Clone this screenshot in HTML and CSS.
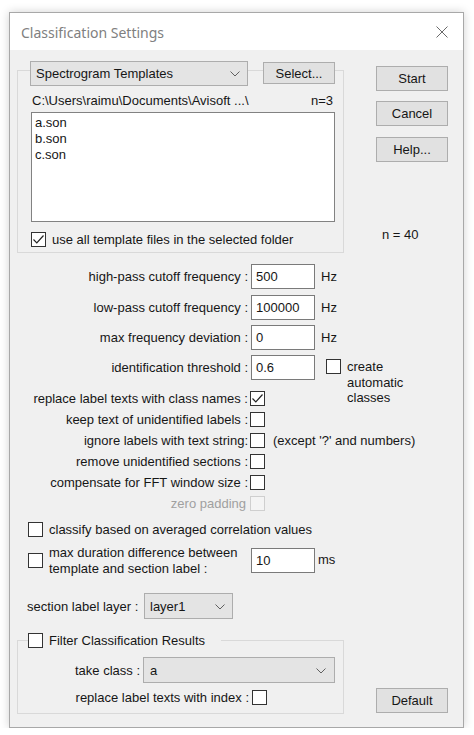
FILE: index.html
```html
<!DOCTYPE html>
<html>
<head>
<meta charset="utf-8">
<title>Classification Settings</title>
<link rel="stylesheet" href="styles.css">
</head>
<body>
<div class="window">
  <div class="titlebar">
    <span class="title">Classification Settings</span>
    <svg class="close" width="12" height="12" viewBox="0 0 12 12"><path d="M0.5 0.5L11.5 11.5M11.5 0.5L0.5 11.5" stroke="#6a6a6a" stroke-width="1" fill="none"/></svg>
  </div>
  <div class="client">
    <div class="top">
      <div class="group tmpl">
        <div class="tmpl-head">
          <div class="combo combo-tmpl"><span>Spectrogram Templates</span><svg class="chev" width="10" height="6" viewBox="0 0 10 6"><path d="M0.5 0.5L5 5L9.5 0.5" stroke="#606060" stroke-width="1" fill="none"/></svg></div>
          <div class="btn btn-select">Select...</div>
        </div>
        <div class="path"><span>C:\Users\raimu\Documents\Avisoft ...\</span><span>n=3</span></div>
        <div class="listbox">
          <div>a.son</div>
          <div>b.son</div>
          <div>c.son</div>
        </div>
        <div class="use-all">
          <span class="cb"><svg width="13" height="13" viewBox="0 0 13 13"><path d="M1.5 6.5L4.8 9.8L11.5 2.5" stroke="#222" stroke-width="1.2" fill="none"/></svg></span>
          <span class="cb-text">use all template files in the selected folder</span>
        </div>
      </div>
      <div class="side">
        <div class="btn btn-side">Start</div>
        <div class="btn btn-side gap1">Cancel</div>
        <div class="btn btn-side gap2">Help...</div>
        <div class="count">n = 40</div>
      </div>
    </div>

    <div class="form">
      <div class="frow">
        <span class="lbl">high-pass cutoff frequency :</span>
        <span class="edit">500</span>
        <span class="unit">Hz</span>
      </div>
      <div class="frow r2">
        <span class="lbl">low-pass cutoff frequency :</span>
        <span class="edit">100000</span>
        <span class="unit">Hz</span>
      </div>
      <div class="frow">
        <span class="lbl">max frequency deviation :</span>
        <span class="edit">0</span>
        <span class="unit">Hz</span>
      </div>
      <div class="frow">
        <span class="lbl">identification threshold :</span>
        <span class="edit">0.6</span>
        <div class="create">
          <span class="cb"></span>
          <span class="create-text">create<br>automatic<br>classes</span>
        </div>
      </div>
      <div class="crow first">
        <span class="lbl">replace label texts with class names :</span>
        <span class="cb"><svg width="13" height="13" viewBox="0 0 13 13"><path d="M1.5 6.5L4.8 9.8L11.5 2.5" stroke="#222" stroke-width="1.2" fill="none"/></svg></span>
      </div>
      <div class="crow">
        <span class="lbl">keep text of unidentified labels :</span>
        <span class="cb"></span>
      </div>
      <div class="crow">
        <span class="lbl">ignore labels with text string:</span>
        <span class="cb"></span>
        <span class="note">(except '?' and numbers)</span>
      </div>
      <div class="crow">
        <span class="lbl">remove unidentified sections :</span>
        <span class="cb"></span>
      </div>
      <div class="crow">
        <span class="lbl">compensate for FFT window size :</span>
        <span class="cb"></span>
      </div>
      <div class="crow">
        <span class="lbl disabled">zero padding</span>
        <span class="cb cb-disabled"></span>
      </div>

      <div class="lrow classify">
        <span class="cb"></span>
        <span class="cb-text">classify based on averaged correlation values</span>
      </div>
      <div class="lrow duration">
        <div class="dur-left">
          <span class="cb"></span>
          <span class="cb-text dur-text">max duration difference between<br>template and section label :</span>
        </div>
        <span class="edit">10</span>
        <span class="unit ms">ms</span>
      </div>
      <div class="lrow layer">
        <span class="layer-lbl">section label layer :</span>
        <div class="combo combo-layer"><span>layer1</span><svg class="chev" width="10" height="6" viewBox="0 0 10 6"><path d="M0.5 0.5L5 5L9.5 0.5" stroke="#606060" stroke-width="1" fill="none"/></svg></div>
      </div>
    </div>

    <div class="bottom">
      <div class="group filter">
        <div class="filter-head">
          <span class="cb"></span>
          <span class="cb-text">Filter Classification Results</span>
        </div>
        <div class="take-row">
          <span class="take-lbl">take class :</span>
          <div class="combo combo-take"><span>a</span><svg class="chev" width="10" height="6" viewBox="0 0 10 6"><path d="M0.5 0.5L5 5L9.5 0.5" stroke="#606060" stroke-width="1" fill="none"/></svg></div>
        </div>
        <div class="index-row">
          <span class="index-lbl">replace label texts with index :</span>
          <span class="cb"></span>
        </div>
      </div>
      <div class="btn btn-side btn-default">Default</div>
    </div>
  </div>
</div>
</body>
</html>
```

FILE: styles.css
```css
html, body {
  margin: 0;
  padding: 0;
  background: #ffffff;
}

body {
  font-family: "Liberation Sans", Arial, sans-serif;
  font-size: 13px;
  color: #161616;
}

.window {
  margin: 12px 0 0 9px;
  width: 455px;
  height: 716px;
  box-sizing: border-box;
  border: 1px solid #a8a8a8;
  box-shadow: 0 0 9px rgba(0, 0, 0, 0.18);
  background: #f0f0f0;
  display: flex;
  flex-direction: column;
}

.titlebar {
  height: 37px;
  background: #ffffff;
  display: flex;
  align-items: center;
  justify-content: space-between;
  padding: 0 15px 0 11px;
  flex: none;
}

.title {
  font-family: "Noto Sans", "Open Sans", sans-serif;
  font-size: 14px;
  color: #808080;
  margin-top: 1px;
}

.close {
  display: block;
}

.client {
  flex: 1;
  display: flex;
  flex-direction: column;
}

/* generic controls */
.btn {
  box-sizing: border-box;
  background: #e1e1e1;
  border: 1px solid #adadad;
  display: flex;
  align-items: center;
  justify-content: center;
  color: #161616;
}

.combo {
  box-sizing: border-box;
  background: #e4e4e4;
  border: 1px solid #adadad;
  display: flex;
  align-items: center;
  justify-content: space-between;
  padding: 0 7px 0 5px;
}

.chev {
  display: block;
  margin-top: 1px;
}

.cb {
  box-sizing: border-box;
  width: 15px;
  height: 15px;
  border: 1px solid #333;
  background: #fff;
  display: flex;
  align-items: center;
  justify-content: center;
  flex: none;
}

.cb svg {
  display: block;
}

.cb-disabled {
  border-color: #cfcfcf;
  background: #f4f4f4;
}

.cb-text {
  margin-left: 6px;
  white-space: nowrap;
}

.edit {
  box-sizing: border-box;
  width: 64px;
  height: 25px;
  background: #fff;
  border: 1px solid #7a7a7a;
  display: flex;
  align-items: center;
  padding-left: 4px;
  flex: none;
}

/* top section */
.top {
  display: flex;
  align-items: flex-start;
}

.group {
  box-sizing: border-box;
  border: 1px solid #d9d9d9;
  width: 327px;
  margin-left: 7px;
}

.tmpl {
  margin-top: 20px;
  height: 183px;
  padding: 0 8px 0 13px;
}

.tmpl-head {
  display: flex;
  align-items: flex-start;
  height: 25px;
  margin-top: -10px;
  margin-left: -1px;
}

.combo-tmpl {
  width: 218px;
  height: 25px;
}

.btn-select {
  width: 72px;
  height: 22px;
  margin-left: 15px;
  margin-top: 1px;
}

.path {
  display: flex;
  justify-content: space-between;
  line-height: 16px;
  margin-top: 7px;
  padding: 0 2px 0 1px;
}

.listbox {
  box-sizing: border-box;
  height: 110px;
  margin-top: 3px;
  background: #fff;
  border: 1px solid #828282;
  padding: 2px 3px;
  line-height: 16px;
}

.use-all {
  display: flex;
  align-items: center;
  height: 16px;
  margin-top: 9px;
}

.side {
  margin-left: 32px;
  margin-top: 16px;
  display: flex;
  flex-direction: column;
}

.btn-side {
  width: 72px;
  height: 25px;
}

.gap1 {
  margin-top: 10px;
}

.gap2 {
  margin-top: 11px;
}

.count {
  margin-top: 65px;
  padding-left: 6px;
  line-height: 16px;
}

/* form */
.form {
  margin-top: 11px;
  display: flex;
  flex-direction: column;
}

.frow {
  display: flex;
  align-items: center;
  height: 25px;
  margin-top: 5px;
}

.frow:first-child {
  margin-top: 0;
}

.frow.r2 {
  margin-top: 6px;
}

.lbl {
  width: 238px;
  text-align: right;
  white-space: nowrap;
  flex: none;
}

.frow .edit {
  margin-left: 3px;
}

.unit {
  margin-left: 6px;
}

.create {
  align-self: flex-start;
  display: flex;
  align-items: flex-start;
  margin-left: 11px;
  margin-top: 4px;
  height: 25px;
}

.create-text {
  margin-left: 6px;
  line-height: 15.5px;
  margin-top: 0;
}

.crow {
  display: flex;
  align-items: center;
  height: 21px;
}

.crow.first {
  margin-top: 8px;
}

.crow .cb {
  margin-left: 2px;
}

.note {
  margin-left: 8px;
}

.disabled {
  color: #a0a0a0;
  padding-right: 2px;
  box-sizing: border-box;
}

.lrow {
  display: flex;
  align-items: center;
}

.classify {
  height: 21px;
  margin-top: 5px;
  padding-left: 18px;
}

.duration {
  height: 30px;
  margin-top: 5px;
}

.dur-left {
  width: 241px;
  box-sizing: border-box;
  padding-left: 18px;
  display: flex;
  align-items: center;
  flex: none;
}

.dur-text {
  line-height: 16px;
  margin-top: 2px;
}

.ms {
  margin-left: 3px;
  margin-top: -2px;
}

.layer {
  height: 26px;
  margin-top: 18px;
  padding-left: 17px;
}

.layer-lbl {
  width: 117px;
  flex: none;
  white-space: nowrap;
}

.combo-layer {
  width: 89px;
  height: 26px;
}

/* bottom */
.bottom {
  display: flex;
  align-items: flex-end;
  margin-top: 21px;
}

.filter {
  height: 74px;
  padding: 0 0 0 10px;
}

.filter-head {
  display: flex;
  align-items: center;
  height: 15px;
  margin-top: -8px;
  background: #f0f0f0;
  width: max-content;
  padding-right: 16px;
}

.take-row {
  display: flex;
  align-items: center;
  margin-top: 9px;
  height: 26px;
}

.take-lbl {
  width: 112px;
  text-align: right;
  flex: none;
  white-space: nowrap;
}

.combo-take {
  width: 192px;
  height: 26px;
  margin-left: 3px;
  padding-left: 6px;
  padding-right: 8px;
}

.index-row {
  display: flex;
  align-items: center;
  height: 17px;
  margin-top: 6px;
}

.index-lbl {
  width: 221px;
  text-align: right;
  flex: none;
  white-space: nowrap;
}

.index-row .cb {
  margin-left: 3px;
}

.btn-default {
  margin-left: 32px;
  margin-bottom: 1px;
}
```
